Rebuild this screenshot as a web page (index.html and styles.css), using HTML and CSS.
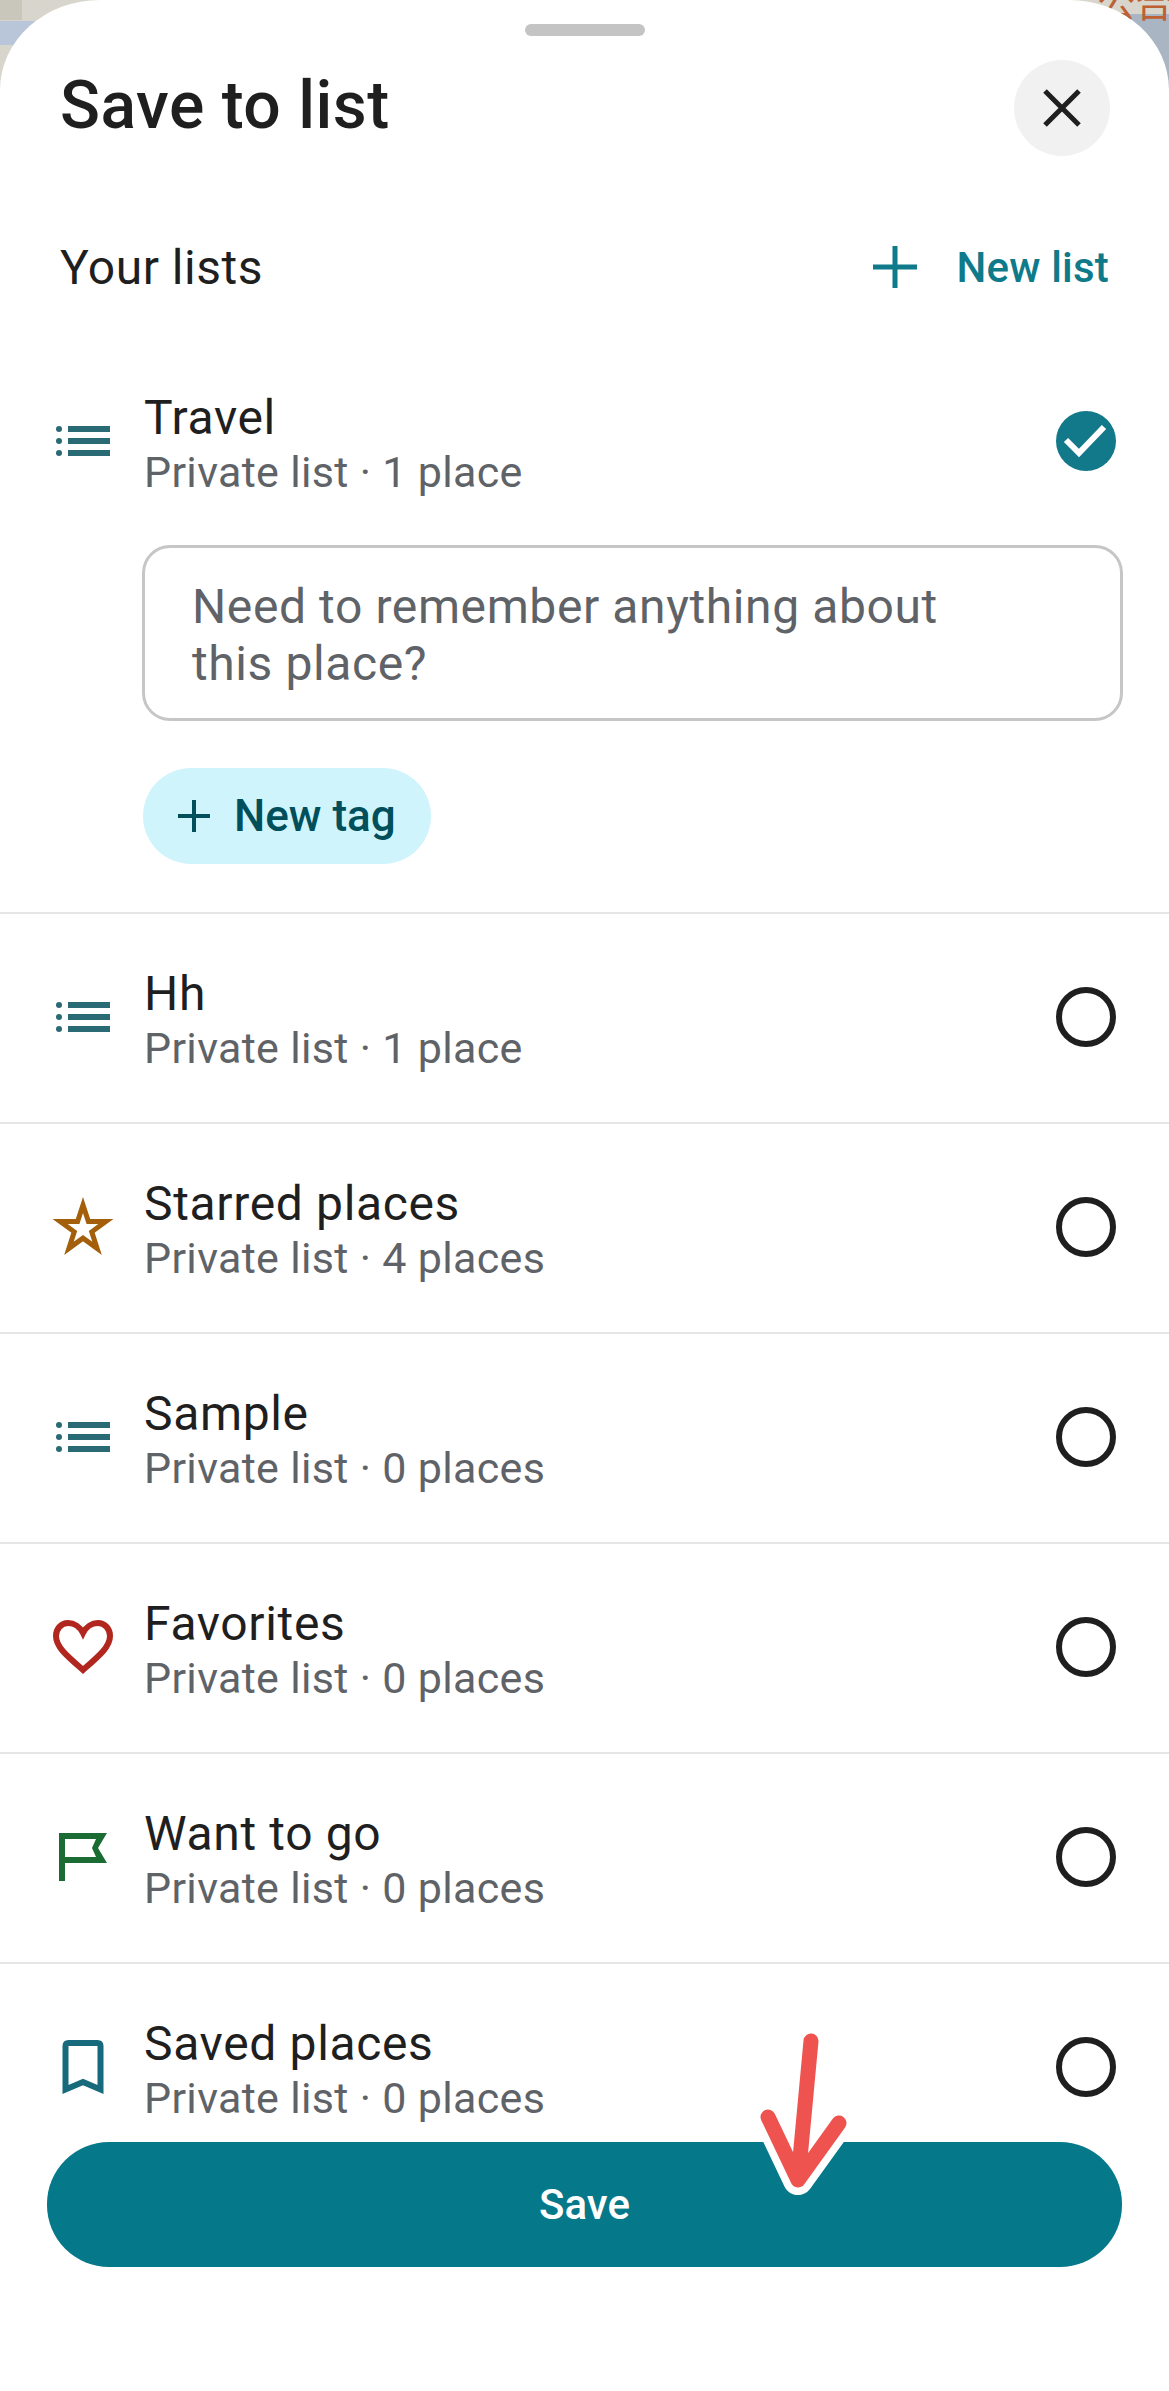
FILE: index.html
```html
<!DOCTYPE html>
<html lang="en">
<head>
  <meta charset="UTF-8" />
  <meta name="viewport" content="width=device-width, initial-scale=1.0"/>
  <title>Save to list</title>
  <link rel="stylesheet" href="styles.css">
</head>
<body>

<!-- bit of the map that shows behind the sheet -->
<div class="backdrop">
  <div class="map-block"></div>
  <div class="map-road"></div>
  <div class="map-water"></div>
  <div class="map-label">公合</div>
</div>

<div class="sheet">
  <div class="handle"></div>

  <div class="sheet-head">
    <h1>Save to list</h1>
    <button class="btn-close" aria-label="Close">
      <svg width="44" height="44" viewBox="0 0 44 44"><path d="M5 5 39 39M39 5 5 39" fill="none" stroke="#1f1f1f" stroke-width="5"/></svg>
    </button>
  </div>

  <div class="section-head">
    <h2>Your lists</h2>
    <div class="new-list">
      <svg width="44" height="44" viewBox="0 0 44 44"><path d="M22 1V43M0 22H44" fill="none" stroke="#0f7a8a" stroke-width="5"/></svg>
      <span>New list</span>
    </div>
  </div>

  <div class="lists">
    <div class="list-row">
      <div class="row-head">
        <svg class="row-icon" viewBox="0 0 72 72"><use href="#icon-list"/></svg>
        <div class="row-text">
          <div class="row-title">Travel</div>
          <div class="row-sub">Private list · 1 place</div>
        </div>
        <svg class="check" width="60" height="60" viewBox="0 0 60 60">
          <circle cx="30" cy="30" r="30" fill="#12798b"/>
          <path d="M10 29 23 42 48 16" fill="none" stroke="#fff" stroke-width="6"/>
        </svg>
      </div>
      <div class="note">Need to remember anything about this place?</div>
      <div class="tag">
        <svg width="34" height="34" viewBox="0 0 34 34"><path d="M17 1V33M1 17H33" fill="none" stroke="#004f5a" stroke-width="4"/></svg>
        <span>New tag</span>
      </div>
    </div>

    <div class="list-row">
      <div class="row-head">
        <svg class="row-icon" viewBox="0 0 72 72"><use href="#icon-list"/></svg>
        <div class="row-text">
          <div class="row-title">Hh</div>
          <div class="row-sub">Private list · 1 place</div>
        </div>
        <div class="radio"></div>
      </div>
    </div>

    <div class="list-row">
      <div class="row-head">
        <svg class="row-icon" viewBox="0 0 72 72">
          <polygon points="36,14 41.4,30.6 58.8,30.6 44.75,40.84 50.1,57.4 36,47.2 21.9,57.4 27.25,40.84 13.2,30.6 30.6,30.6" fill="none" stroke="#a35f0a" stroke-width="5" stroke-miterlimit="10"/>
        </svg>
        <div class="row-text">
          <div class="row-title">Starred places</div>
          <div class="row-sub">Private list · 4 places</div>
        </div>
        <div class="radio"></div>
      </div>
    </div>

    <div class="list-row">
      <div class="row-head">
        <svg class="row-icon" viewBox="0 0 72 72"><use href="#icon-list"/></svg>
        <div class="row-text">
          <div class="row-title">Sample</div>
          <div class="row-sub">Private list · 0 places</div>
        </div>
        <div class="radio"></div>
      </div>
    </div>

    <div class="list-row">
      <div class="row-head">
        <svg class="row-icon" viewBox="0 0 72 72">
          <path d="M36 22C33 16 27 12 21 12 14 12 9 18 9 25 9 36 20 45 36 59 52 45 63 36 63 25 63 18 58 12 51 12 45 12 39 16 36 22Z" fill="none" stroke="#b1271f" stroke-width="6"/>
        </svg>
        <div class="row-text">
          <div class="row-title">Favorites</div>
          <div class="row-sub">Private list · 0 places</div>
        </div>
        <div class="radio"></div>
      </div>
    </div>

    <div class="list-row">
      <div class="row-head">
        <svg class="row-icon" viewBox="0 0 72 72">
          <path d="M12 12H60L51 27 60 42H18V60H12ZM18 18V36H49L45 27 49 18Z" fill="#1a6b34" fill-rule="evenodd"/>
        </svg>
        <div class="row-text">
          <div class="row-title">Want to go</div>
          <div class="row-sub">Private list · 0 places</div>
        </div>
        <div class="radio"></div>
      </div>
    </div>

    <div class="list-row">
      <div class="row-head">
        <svg class="row-icon" viewBox="0 0 72 72">
          <path d="M18.5 15Q18.5 12 21.5 12H50.5Q53.5 12 53.5 15V58.5L36 51 18.5 58.5Z" fill="none" stroke="#176a7b" stroke-width="6"/>
        </svg>
        <div class="row-text">
          <div class="row-title">Saved places</div>
          <div class="row-sub">Private list · 0 places</div>
        </div>
        <div class="radio"></div>
      </div>
    </div>
  </div>

  <button class="btn-save">Save</button>

  <!-- red arrow somebody drew on the screenshot -->
  <svg class="arrow" width="120" height="190" viewBox="0 0 120 190">
    <path d="M28 97 58 160 99 103" fill="none" stroke="#fff" stroke-width="30" stroke-linecap="round" stroke-linejoin="round"/>
    <path d="M71 21 58 160M28 97 58 160 99 103" fill="none" stroke="#ef5350" stroke-width="15" stroke-linecap="round" stroke-linejoin="round"/>
  </svg>
</div>

<svg class="defs" width="0" height="0">
  <symbol id="icon-list" viewBox="0 0 72 72">
    <g fill="#2a6a75">
      <circle cx="12" cy="24" r="3"/>
      <circle cx="12" cy="36" r="3"/>
      <circle cx="12" cy="48" r="3"/>
      <rect x="21" y="21" width="42" height="6"/>
      <rect x="21" y="33" width="42" height="6"/>
      <rect x="21" y="45" width="42" height="6"/>
    </g>
  </symbol>
</svg>

</body>
</html>
```

FILE: styles.css
```css
* {
  box-sizing: border-box;
}

body {
  font-family: Roboto, "Noto Sans CJK SC", sans-serif;
  background: #fff;
  margin: 0;
  color: #1f1f1f;
}

.backdrop {
  position: absolute;
  top: 0;
  left: 0;
  width: 100%;
  height: 110px;
  overflow: hidden;
  background: #d8d6cc;
}

.map-road {
  position: absolute;
  top: 21px;
  left: 0;
  width: 100%;
  height: 24px;
  background: #b9c5d8;
}

.map-water {
  position: absolute;
  top: 14px;
  right: 0;
  width: 50px;
  height: 96px;
  background: #a9b5c2;
}

.map-block {
  position: absolute;
  top: 0;
  left: 0;
  width: 22px;
  height: 20px;
  background: #c9c6bb;
}

.map-label {
  position: absolute;
  top: -18px;
  right: -4px;
  font-size: 38px;
  line-height: 44px;
  color: #bd6034;
}

.sheet {
  position: relative;
  min-height: 2391px;
  background: white;
  border-radius: 100px 100px 0 0 / 90px 90px 0 0;
  overflow: hidden;
}

.handle {
  width: 120px;
  height: 12px;
  margin: 0 auto;
  position: relative;
  top: 24px;
  background: #c4c4c4;
  border-radius: 6px;
}

.sheet-head {
  display: flex;
  justify-content: space-between;
  align-items: center;
  height: 96px;
  margin-top: 48px;
  padding: 0 59px 0 60px;
}

h1 {
  margin: 0 0 4px;
  font-size: 66px;
  font-weight: 500;
  letter-spacing: 0.5px;
  line-height: 92px;
}

.btn-close {
  display: flex;
  align-items: center;
  justify-content: center;
  width: 96px;
  height: 96px;
  padding: 0;
  border: none;
  border-radius: 50%;
  background: #f1f1f1;
}

.section-head {
  display: flex;
  justify-content: space-between;
  align-items: center;
  height: 60px;
  margin-top: 81px;
  padding: 0 60px 0 60px;
}

h2 {
  margin: 0;
  font-size: 48px;
  font-weight: 400;
  letter-spacing: 0.5px;
}

.new-list {
  display: flex;
  align-items: center;
  gap: 39px;
  font-size: 42px;
  font-weight: 500;
  letter-spacing: 0.2px;
  color: #0f7a8a;
}

.lists {
  height: 1804px;
  margin-top: 41px;
  overflow: hidden;
}

.list-row {
  padding-bottom: 2px;
  border-bottom: 2px solid #e6e6e6;
}

.row-head {
  display: flex;
  align-items: center;
  height: 206px;
  padding: 0 53px 0 47px;
}

.row-icon {
  width: 72px;
  height: 72px;
  flex: none;
}

.row-text {
  flex: 1;
  margin-left: 25px;
  padding-top: 5px;
}

.row-title {
  font-size: 48px;
  line-height: 56px;
  letter-spacing: 0.65px;
}

.row-sub {
  font-size: 43px;
  line-height: 52px;
  letter-spacing: 0.33px;
  color: #5f6368;
}

.radio {
  width: 60px;
  height: 60px;
  flex: none;
  border: 6px solid #1f1f1f;
  border-radius: 50%;
}

.note {
  height: 176px;
  margin: 1px 46px 0 142px;
  padding: 30px 130px 0 47px;
  border: 3px solid #c6c6c6;
  border-radius: 28px;
  font-size: 48px;
  line-height: 57px;
  letter-spacing: 0.6px;
  color: #5f6368;
}

.tag {
  display: flex;
  align-items: center;
  gap: 23px;
  width: 288px;
  height: 96px;
  margin: 47px 0 46px 143px;
  padding-left: 34px;
  border-radius: 48px;
  background: #cff4fc;
  font-size: 44px;
  font-weight: 500;
  color: #004f5a;
}

.btn-save {
  display: block;
  width: 1075px;
  height: 125px;
  margin: 0 0 0 47px;
  border: none;
  border-radius: 62px;
  background: #05788a;
  font-family: inherit;
  font-size: 42px;
  font-weight: 500;
  color: white;
}

.arrow {
  position: absolute;
  left: 740px;
  top: 2020px;
}

.defs {
  position: absolute;
}
```
